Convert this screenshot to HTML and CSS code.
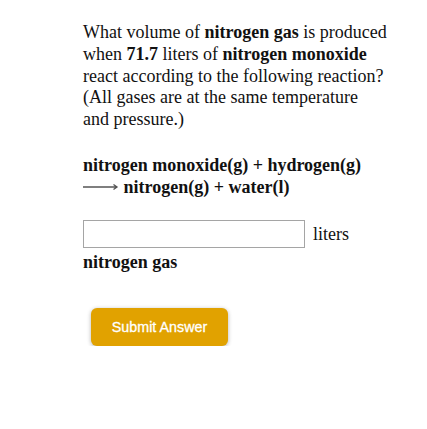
FILE: index.html
```html
<!DOCTYPE html>
<html>
<head>
<meta charset="utf-8">
<link rel="stylesheet" href="styles.css">
</head>
<body>
<div class="question">
  <p class="prompt">What volume of <b>nitrogen gas</b> is produced<br>when <b>71.7</b> liters of <b>nitrogen monoxide</b><br>react according to the following reaction?<br>(All gases are at the same temperature<br>and pressure.)</p>
  <p class="reaction"><b>nitrogen monoxide(g) + hydrogen(g)<br><svg class="arrow" width="36" height="10" viewBox="0 0 36 10"><path d="M0 5H34M30.5 2.5L34 5L30.5 7.5" fill="none" stroke="#555" stroke-width="1.3"/></svg> nitrogen(g) + water(l)</b></p>
  <div class="answer-row">
    <input class="answer" type="text">
    <span class="unit">liters</span>
  </div>
  <div class="label"><b>nitrogen gas</b></div>
  <button class="submit" type="button">Submit Answer</button>
</div>
</body>
</html>
```
FILE: styles.css
```css
body {
  margin: 0;
  background: #fff;
  font-family: "Liberation Serif", "Times New Roman", serif;
  font-size: 18px;
  color: #111;
}
.question {
  width: 330px;
  padding: 22px 0 0 83px;
}
.prompt {
  margin: 0;
  line-height: 21.75px;
}
.reaction {
  margin: 23px 0 0;
  line-height: 22px;
}
.arrow {
  vertical-align: 1px;
}
.answer-row {
  display: flex;
  align-items: flex-start;
  gap: 8px;
  margin-top: 22px;
}
.answer {
  width: 222px;
  height: 28px;
  box-sizing: border-box;
  border: 1px solid #a5a5a5;
  margin: 0;
  padding: 0;
}
.unit {
  line-height: 22px;
  margin-top: 3px;
}
.label {
  margin-top: 3px;
  line-height: 22px;
}
.submit {
  display: block;
  margin: 35px 0 0 8px;
  width: 137px;
  height: 38px;
  border: 0;
  border-radius: 6px;
  background: #e1a200;
  color: #fff;
  font-family: "Liberation Sans", Arial, sans-serif;
  font-size: 14.3px;
  -webkit-text-stroke: 0.3px #fff;
  box-shadow: 0 1px 4px rgba(0,0,0,0.3);
}
```
